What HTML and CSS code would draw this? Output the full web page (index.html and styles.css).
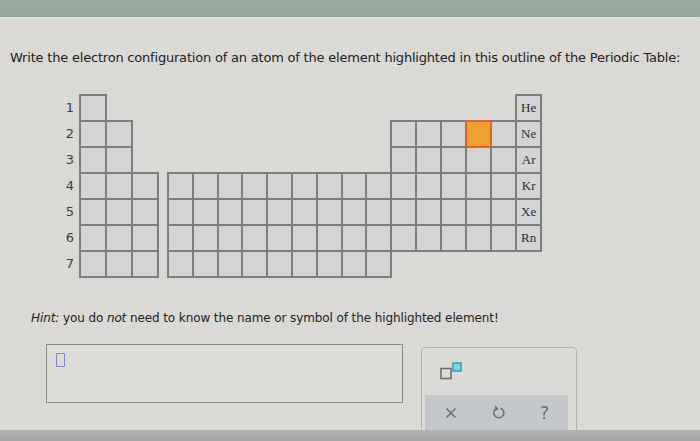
FILE: index.html
```html
<!DOCTYPE html>
<html>
<head>
<meta charset="utf-8">
<link rel="stylesheet" href="styles.css">
</head>
<body>
<div class="topbar"></div>
<main class="page">
  <p class="question">Write the electron configuration of an atom of the element highlighted in this outline of the Periodic Table:</p>
  <div class="ptable">
    <div class="lbl">1</div><div class="c"></div><div class="c s20 noble">He</div>
    <div class="lbl">2</div><div class="c"></div><div class="c"></div><div class="c s15"></div><div class="c"></div><div class="c"></div><div class="c hi"></div><div class="c"></div><div class="c noble">Ne</div>
    <div class="lbl">3</div><div class="c"></div><div class="c"></div><div class="c s15"></div><div class="c"></div><div class="c"></div><div class="c"></div><div class="c"></div><div class="c noble">Ar</div>
    <div class="lbl">4</div><div class="c"></div><div class="c"></div><div class="c"></div><div class="c s6"></div><div class="c"></div><div class="c"></div><div class="c"></div><div class="c"></div><div class="c"></div><div class="c"></div><div class="c"></div><div class="c"></div><div class="c"></div><div class="c"></div><div class="c"></div><div class="c"></div><div class="c"></div><div class="c noble">Kr</div>
    <div class="lbl">5</div><div class="c"></div><div class="c"></div><div class="c"></div><div class="c s6"></div><div class="c"></div><div class="c"></div><div class="c"></div><div class="c"></div><div class="c"></div><div class="c"></div><div class="c"></div><div class="c"></div><div class="c"></div><div class="c"></div><div class="c"></div><div class="c"></div><div class="c"></div><div class="c noble">Xe</div>
    <div class="lbl">6</div><div class="c"></div><div class="c"></div><div class="c"></div><div class="c s6"></div><div class="c"></div><div class="c"></div><div class="c"></div><div class="c"></div><div class="c"></div><div class="c"></div><div class="c"></div><div class="c"></div><div class="c"></div><div class="c"></div><div class="c"></div><div class="c"></div><div class="c"></div><div class="c noble">Rn</div>
    <div class="lbl">7</div><div class="c"></div><div class="c"></div><div class="c"></div><div class="c s6"></div><div class="c"></div><div class="c"></div><div class="c"></div><div class="c"></div><div class="c"></div><div class="c"></div><div class="c"></div><div class="c"></div>
  </div>
  <p class="hint"><i>Hint:</i> you do <i>not</i> need to know the name or symbol of the highlighted element!</p>
  <div class="answer">
    <div class="inputbox"><span class="caret"></span></div>
    <div class="tools">
      <div class="tools-top">
        <svg class="sup" width="24" height="18" viewBox="0 0 24 18">
          <rect x="1" y="6.5" width="10" height="10" fill="none" stroke="#6f6f6f" stroke-width="1.6"/>
          <rect x="13" y="1" width="8" height="8" fill="#7fd6e0" stroke="#2a9aa8" stroke-width="1.4"/>
        </svg>
      </div>
      <div class="tools-bar">
        <svg width="14" height="14" viewBox="0 0 14 14"><path d="M2.5 2.5 L11.5 11.5 M11.5 2.5 L2.5 11.5" stroke="#6a6e72" stroke-width="1.6" fill="none"/></svg>
        <svg width="14" height="16" viewBox="0 0 14 16"><path d="M4.2 3.6 A5 5 0 1 0 8.6 3.2" stroke="#6a6e72" stroke-width="1.5" fill="none"/><path d="M3 1 L5.5 4 L2 5.2" stroke="#6a6e72" stroke-width="1.5" fill="none"/></svg>
        <span class="help">?</span>
      </div>
    </div>
  </div>
</main>
<div class="bottombar"></div>
</body>
</html>
```
FILE: styles.css
```css
html, body {
  margin: 0;
  padding: 0;
  width: 700px;
  height: 441px;
  overflow: hidden;
  background: #d9d8d5;
  font-family: "DejaVu Sans", Verdana, sans-serif;
  color: #222;
}
.topbar {
  height: 17px;
  background: linear-gradient(#9aa89f, #93a59e);
}
.page {
  height: 413px;
  position: relative;
  background: #dad9d6;
  overflow: hidden;
}
.question {
  margin: 0;
  padding: 33px 0 0 10px;
  font-size: 13px;
  letter-spacing: -0.2px;
  line-height: 15px;
  white-space: nowrap;
}
.ptable {
  display: grid;
  margin: 30px 0 0 58px;
  grid-template-columns: 22px repeat(3, 26px) 10px repeat(9, 24.8px) repeat(6, 25px);
  grid-auto-rows: 26px;
  width: max-content;
}
.lbl {
  grid-column: 1;
  font-size: 13px;
  color: #34463b;
  text-align: right;
  padding-right: 6px;
  line-height: 26px;
}
.c {
  background: #d2d4d6;
  outline: 2px solid #7d7d7d;
  outline-offset: -1px;
  font-family: "Liberation Serif", "Times New Roman", serif;
  font-size: 13px;
  color: #2e2e2e;
  text-align: center;
  line-height: 26px;
}
.s6 { grid-column-start: 6; }
.s15 { grid-column-start: 15; }
.s20 { grid-column-start: 20; }
.hi {
  background: #eea232;
  outline-color: #e2612a;
  position: relative;
  z-index: 1;
}
.hint {
  margin: 34px 0 0 31px;
  font-size: 12px;
  letter-spacing: -0.1px;
  line-height: 14px;
}
.answer {
  display: flex;
  align-items: flex-start;
  margin: 19px 0 0 46px;
  gap: 18px;
}
.inputbox {
  width: 357px;
  height: 59px;
  border: 1px solid #8a8a88;
  background: #dddcd9;
  padding: 8px 0 0 9px;
  box-sizing: border-box;
}
.caret {
  display: block;
  width: 7px;
  height: 12px;
  border: 1.5px solid #7a82c6;
  border-radius: 1px;
}
.tools {
  margin-top: 3px;
  width: 156px;
  height: 90px;
  border: 1px solid #b3b3b1;
  border-radius: 4px;
  background: #dcdbd8;
  box-sizing: border-box;
  padding: 0 8px 0 3px;
  display: flex;
  flex-direction: column;
}
.tools-top {
  height: 47px;
  padding: 14px 0 0 15px;
  box-sizing: border-box;
}
.sup { display: block; }
.tools-bar {
  height: 35px;
  background: #c5c8ca;
  display: flex;
  align-items: center;
  gap: 34px;
  padding: 0 0 0 19px;
}
.help {
  font-size: 17px;
  color: #6a6e72;
}
.bottombar {
  height: 11px;
  background: linear-gradient(#b2b3b1, #a3a5a3);
}
```
